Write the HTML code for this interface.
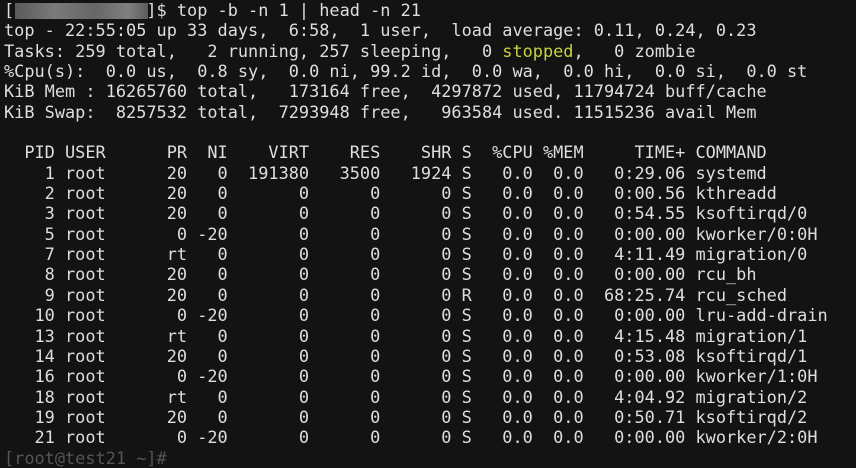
<!DOCTYPE html>
<html><head><meta charset="utf-8"><style>
html,body{margin:0;padding:0;background:#131313;width:856px;height:453px;overflow:hidden}
pre{margin:0;position:absolute;left:4px;top:0;font-family:"DejaVu Sans Mono","Liberation Mono",monospace;font-size:16.9px;line-height:20.35px;color:#dedede}
.y{color:#c8d23c}
.blur{position:absolute;left:15px;top:3px;width:133px;height:16px;background:linear-gradient(90deg,#5a5a5a,#7a7a7a 30%,#666 60%,#808080 85%,#5c5c5c)}
.f{color:#555}
</style></head><body>
<div class="blur"></div>
<pre>[             ]$ top -b -n 1 | head -n 21
top - 22:55:05 up 33 days,  6:58,  1 user,  load average: 0.11, 0.24, 0.23
Tasks: 259 total,   2 running, 257 sleeping,   0 <span class="y">stopped</span>,   0 zombie
%Cpu(s):  0.0 us,  0.8 sy,  0.0 ni, 99.2 id,  0.0 wa,  0.0 hi,  0.0 si,  0.0 st
KiB Mem : 16265760 total,   173164 free,  4297872 used, 11794724 buff/cache
KiB Swap:  8257532 total,  7293948 free,   963584 used. 11515236 avail Mem

  PID USER      PR  NI    VIRT    RES    SHR S  %CPU %MEM     TIME+ COMMAND
    1 root      20   0  191380   3500   1924 S   0.0  0.0   0:29.06 systemd
    2 root      20   0       0      0      0 S   0.0  0.0   0:00.56 kthreadd
    3 root      20   0       0      0      0 S   0.0  0.0   0:54.55 ksoftirqd/0
    5 root       0 -20       0      0      0 S   0.0  0.0   0:00.00 kworker/0:0H
    7 root      rt   0       0      0      0 S   0.0  0.0   4:11.49 migration/0
    8 root      20   0       0      0      0 S   0.0  0.0   0:00.00 rcu_bh
    9 root      20   0       0      0      0 R   0.0  0.0  68:25.74 rcu_sched
   10 root       0 -20       0      0      0 S   0.0  0.0   0:00.00 lru-add-drain
   13 root      rt   0       0      0      0 S   0.0  0.0   4:15.48 migration/1
   14 root      20   0       0      0      0 S   0.0  0.0   0:53.08 ksoftirqd/1
   16 root       0 -20       0      0      0 S   0.0  0.0   0:00.00 kworker/1:0H
   18 root      rt   0       0      0      0 S   0.0  0.0   4:04.92 migration/2
   19 root      20   0       0      0      0 S   0.0  0.0   0:50.71 ksoftirqd/2
   21 root       0 -20       0      0      0 S   0.0  0.0   0:00.00 kworker/2:0H
<span class="f">[root@test21 ~]#</span></pre>
</body></html>
